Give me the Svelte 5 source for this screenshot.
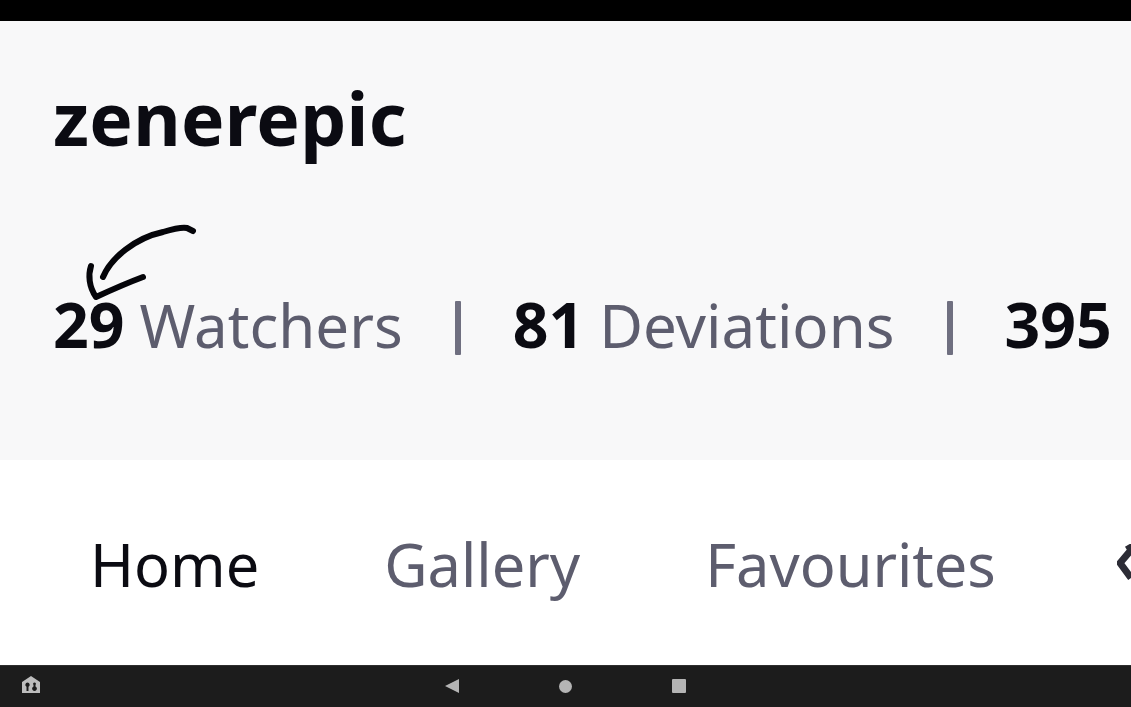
<script lang="ts">
	const stats = [
		{ count: '29', label: 'Watchers' },
		{ count: '81', label: 'Deviations' },
		{ count: '395', label: '' }
	];
	const tabs = ['Home', 'Gallery', 'Favourites'];
</script>

<div class="screen">
	<div class="status"></div>
	<header class="profile">
		<h1>zenerepic</h1>
		<div class="stats">
			<svg class="scribble" viewBox="0 0 120 80" width="120" height="80" aria-hidden="true">
				<path d="M20 52 C28 33 52 13 80 7 C90 4 100 2 104 3 L110 6" />
				<path d="M8 41 C5 50 6 62 13 72 C26 66 44 58 60 52" />
			</svg>
			{#each stats as s, i}
				{#if i > 0}<span class="sep"></span>{/if}
				<span class="stat"><b>{s.count}</b>{#if s.label}<span class="name">{s.label}</span>{/if}</span>
			{/each}
		</div>
	</header>
	<nav class="tabs">
		{#each tabs as t, i}
			<span class="tab" class:active={i === 0}>{t}</span>
		{/each}
		<svg class="more" viewBox="0 0 30 50" width="30" height="50" aria-hidden="true">
			<path d="M11 1 L14 6 L3 19 L14 34" />
		</svg>
	</nav>
	<footer class="navbar">
		<svg class="home" viewBox="0 0 20 18" width="20" height="18" aria-hidden="true">
			<path fill-rule="evenodd" d="M10 0 L19 6 V17 H1 V6 Z M6.5 6.5 a2.3 2.3 0 0 0 -1 4.3 V15 h2 V10.8 a2.3 2.3 0 0 0 -1 -4.3 Z M13.5 6.5 a1.4 1.4 0 0 0 -1 2.4 V10.4 a2.4 2.4 0 1 0 2 0 V8.9 a1.4 1.4 0 0 0 -1 -2.4 Z" />
		</svg>
		<div class="keys">
			<svg viewBox="0 0 14 14" width="14" height="14" aria-hidden="true"><path d="M14 0 V14 L0 7 Z" /></svg>
			<span class="dot"></span>
			<span class="square"></span>
		</div>
	</footer>
</div>

<style>
	:global(body) {
		margin: 0;
	}

	.screen {
		width: 1131px;
		height: 707px;
		display: flex;
		flex-direction: column;
		overflow: hidden;
		font-family: 'Noto Sans', 'Open Sans', sans-serif;
		background: #fff;
	}

	.status {
		height: 21px;
		flex: none;
		background: #000;
	}

	.profile {
		height: 439px;
		flex: none;
		box-sizing: border-box;
		padding: 52px 0 0 53px;
		background: #f8f8f9;
	}

	h1 {
		margin: 0;
		font-size: 73px;
		line-height: 90px;
		font-weight: 700;
		letter-spacing: 0.3px;
		color: #0b0b12;
	}

	.stats {
		position: relative;
		display: flex;
		align-items: center;
		margin-top: 121px;
		height: 80px;
		white-space: nowrap;
		font-size: 60px;
		line-height: 80px;
	}

	.scribble {
		position: absolute;
		left: 30px;
		top: -59px;
		overflow: visible;
		fill: none;
		stroke: #05050a;
		stroke-width: 6;
		stroke-linecap: round;
		stroke-linejoin: round;
	}

	.stat b {
		font-size: 62.5px;
		font-weight: 700;
		color: #0b0b12;
	}

	.name {
		margin-left: 15px;
		color: #5d5d6e;
	}

	.sep {
		width: 6px;
		height: 54px;
		margin: 8px 52px 0;
		border-radius: 1px;
		background: #6f6f80;
	}

	.tabs {
		position: relative;
		flex: 1;
		display: flex;
		align-items: center;
		gap: 125px;
		padding-left: 90px;
		padding-top: 2px;
		white-space: nowrap;
		font-size: 59.5px;
		color: #5d5d6e;
	}

	.tab.active {
		color: #0b0b12;
	}

	.more {
		position: absolute;
		left: 1117px;
		top: 84px;
		fill: none;
		stroke: #2c2c35;
		stroke-width: 7;
	}

	.navbar {
		height: 42px;
		flex: none;
		position: relative;
		display: flex;
		align-items: center;
		justify-content: center;
		background: #1c1c1c;
		border-top: 1px solid #2e2e2e;
		box-sizing: border-box;
	}

	.home {
		position: absolute;
		left: 21px;
		top: 10px;
		fill: #bdbdbd;
	}

	.keys {
		display: flex;
		align-items: center;
		gap: 100px;
		margin-left: -1px;
		margin-bottom: 1px;
	}

	.keys svg {
		fill: #b4b4b4;
	}

	.dot {
		width: 13px;
		height: 13px;
		border-radius: 50%;
		background: #b4b4b4;
	}

	.square {
		width: 14px;
		height: 14px;
		border-radius: 1px;
		background: #b4b4b4;
	}
</style>
